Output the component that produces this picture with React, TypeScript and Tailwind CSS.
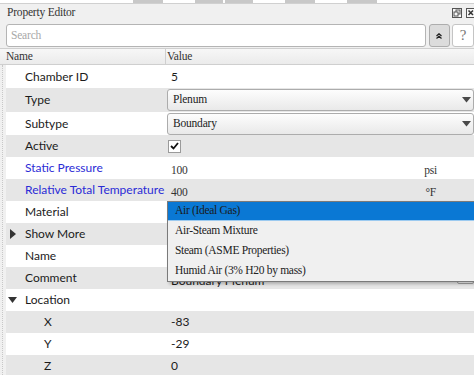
import React from "react";

const serif = { fontFamily: '"Liberation Serif", "Times New Roman", serif' };
const sans = { fontFamily: 'Lato, "Noto Sans", sans-serif' };

function Caret({ className = "" }: { className?: string }) {
  return (
    <svg width="9" height="6" viewBox="0 0 9 6" className={className}>
      <path d="M0 0 L9 0 L4.5 5.5 Z" fill="#4a4a4a" />
    </svg>
  );
}

function Dropdown({ text }: { text: string }) {
  return (
    <div className="flex h-[22px] w-full items-center justify-between rounded-[3px] border border-[#acacac] bg-gradient-to-b from-[#fdfdfd] to-[#e9e9e9] pl-[5px] pr-[2px]">
      <span className="text-[11.5px] tracking-[-0.2px] text-[#222]" style={serif}>
        {text}
      </span>
      <Caret />
    </div>
  );
}

type RowProps = {
  h: string;
  gray?: boolean;
  name: React.ReactNode;
  value?: React.ReactNode;
  indent?: string;
  icon?: React.ReactNode;
  blue?: boolean;
};

function Row({ h, gray, name, value, indent = "pl-[19px]", icon, blue }: RowProps) {
  return (
    <div className={`flex ${h} ${gray ? "bg-[#e6e6e6]" : "bg-white"}`}>
      <div className={`relative flex w-[161px] shrink-0 items-center ${indent}`}>
        {icon}
        <span
          className={`text-[12px] leading-none whitespace-nowrap ${blue ? "text-[#2b2bd6]" : "text-[#1b1b1b]"}`}
          style={sans}
        >
          {name}
        </span>
      </div>
      <div className="flex min-w-0 flex-1 items-center">{value}</div>
    </div>
  );
}

export default function App() {
  return (
    <div className="relative h-[375px] w-[474px] overflow-hidden bg-[#f0f0f0]">
      {/* top strip of tabs */}
      <div className="flex h-[4px] border-b border-[#d0d0d0] bg-white">
        <div className="w-[133px]" />
        <div className="w-[30px] bg-[#c8c8c8]" />
        <div className="w-[32px]" />
        <div className="w-[28px] bg-[#c8c8c8]" />
        <div className="w-[2px]" />
        <div className="w-[28px] bg-[#c8c8c8]" />
        <div className="w-[32px]" />
        <div className="w-[30px] bg-[#c8c8c8]" />
        <div className="w-[32px]" />
        <div className="w-[30px] bg-[#c8c8c8]" />
      </div>

      {/* title */}
      <div className="flex h-[18px] items-center justify-between pl-[7px] pr-0">
        <span className="text-[11.5px] tracking-[-0.2px] text-[#333]" style={serif}>
          Property Editor
        </span>
        <div className="flex items-center gap-[4px]">
          <svg width="10" height="10" viewBox="0 0 10 10">
            <rect x="0.5" y="0.5" width="9" height="9" fill="#f7f7f7" stroke="#555" />
            <rect x="4" y="2" width="4" height="4" fill="none" stroke="#555" />
            <rect x="2" y="4" width="4" height="4" fill="#f7f7f7" stroke="#555" />
          </svg>
          <svg width="8" height="10" viewBox="0 0 8 10">
            <rect x="0.5" y="0.5" width="9" height="9" fill="#f7f7f7" stroke="#555" />
            <path d="M2.5 2.5 L7 7 M7 2.5 L2.5 7" stroke="#333" strokeWidth="1.5" />
          </svg>
        </div>
      </div>

      {/* search row */}
      <div className="mt-[2px] flex h-[23px] items-stretch pl-[6px]">
        <div className="flex w-[425px] items-center rounded-[3px] border border-[#b4b4b4] bg-white pl-[4px]">
          <span className="text-[11.5px] tracking-[-0.2px] text-[#a8a8a8]" style={serif}>
            Search
          </span>
        </div>
        <div className="ml-[3px] flex w-[22px] items-center justify-center rounded-[3px] border border-[#adadad] bg-[#dcdcdc]">
          <svg width="6" height="6" viewBox="0 0 6 6">
            <path d="M0.5 3 L3 0.8 L5.5 3 M0.5 5.5 L3 3.3 L5.5 5.5" stroke="#222" strokeWidth="1.3" fill="none" />
          </svg>
        </div>
        <div className="ml-[2px] flex w-[22px] items-center justify-center rounded-[3px] border border-[#c4c4c4] bg-white">
          <span className="text-[15px] text-[#777]" style={serif}>
            ?
          </span>
        </div>
      </div>

      {/* header */}
      <div className="mt-[1px] flex h-[17px] border-t border-b border-[#cfcfcf] bg-gradient-to-b from-[#f7f7f7] to-[#ebebeb] pl-[6px]">
        <div className="flex w-[160px] items-center border-r border-[#cfcfcf]">
          <span className="text-[11.5px] tracking-[-0.2px] text-[#333]" style={serif}>
            Name
          </span>
        </div>
        <div className="flex items-center pl-[1px]">
          <span className="text-[11.5px] tracking-[-0.2px] text-[#333]" style={serif}>
            Value
          </span>
        </div>
      </div>

      {/* rows */}
      <div className="flex">
        <div className="w-[6px] shrink-0">
          <div className="ml-[2px] h-full border-l border-dotted border-[#c8c8c8]" />
        </div>
        <div className="flex-1">
          <Row h="h-[23px]" name="Chamber ID" value={<span className="pl-[4px] text-[12px] text-[#1b1b1b]" style={sans}>5</span>} />
          <Row h="h-[24px]" gray name="Type" value={<Dropdown text="Plenum" />} />
          <Row h="h-[23px]" name="Subtype" value={<Dropdown text="Boundary" />} />
          <Row
            h="h-[22px]"
            gray
            name="Active"
            value={
              <div className="ml-[1px] flex h-[13px] w-[13px] items-center justify-center border border-[#9a9a9a] bg-white">
                <svg width="9" height="8" viewBox="0 0 9 8">
                  <path d="M1 4 L3.5 6.5 L8 1" stroke="#111" strokeWidth="1.8" fill="none" />
                </svg>
              </div>
            }
          />
          <Row
            h="h-[22px]"
            blue
            name="Static Pressure"
            value={
              <div className="flex w-full items-center justify-between pt-[6px] pr-[37px] pl-[4px] text-[11.5px] tracking-[-0.2px] text-[#333]" style={serif}>
                <span>100</span>
                <span>psi</span>
              </div>
            }
          />
          <Row
            h="h-[22px]"
            gray
            blue
            name="Relative Total Temperature"
            value={
              <div className="flex w-full items-center justify-between pt-[5px] pr-[38px] pl-[4px] text-[11.5px] tracking-[-0.2px] text-[#333]" style={serif}>
                <span>400</span>
                <span>°F</span>
              </div>
            }
          />
          <Row h="h-[22px]" name="Material" />
          <Row
            h="h-[22px]"
            gray
            name="Show More"
            icon={
              <svg width="6" height="10" viewBox="0 0 6 10" className="absolute left-[4px] top-[6px]">
                <path d="M0 0 L6 5 L0 10 Z" fill="#333" />
              </svg>
            }
          />
          <Row h="h-[22px]" name="Name" />
          <Row
            h="h-[22px]"
            gray
            name="Comment"
            value={
              <div className="flex w-full items-center justify-between pt-[6px] pl-[4px]">
                <span className="text-[12px] text-[#1b1b1b]" style={sans}>
                  Boundary Plenum
                </span>
                <div className="mt-[-6px] flex h-[12px] w-[17px] items-start justify-center rounded-[2px] border border-[#a0a0a0] bg-[#f4f4f4] text-[9px] leading-[6px] text-[#333]">
                  ...
                </div>
              </div>
            }
          />
          <Row
            h="h-[22px]"
            name="Location"
            icon={
              <svg width="9" height="6" viewBox="0 0 9 6" className="absolute left-[2px] top-[8px]">
                <path d="M0 0 L9 0 L4.5 6 Z" fill="#333" />
              </svg>
            }
          />
          <Row h="h-[22px]" gray indent="pl-[38px]" name="X" value={<span className="pl-[4px] text-[12px] text-[#1b1b1b]" style={sans}>-83</span>} />
          <Row h="h-[22px]" indent="pl-[38px]" name="Y" value={<span className="pl-[4px] text-[12px] text-[#1b1b1b]" style={sans}>-29</span>} />
          <Row h="h-[22px]" gray indent="pl-[38px]" name="Z" value={<span className="pl-[4px] text-[12px] text-[#1b1b1b]" style={sans}>0</span>} />
        </div>
      </div>

      {/* dropdown popup */}
      <div className="absolute left-[167px] top-[201px] h-[81px] w-[312px] border border-[#7a7a7a] bg-[#f0f0f0] shadow-[2px_2px_3px_rgba(0,0,0,0.25)]">
        <div className="flex h-[19px] items-center border-b border-[#9ccaf0] bg-[#0a78d4] pl-[7px]">
          <span className="text-[11.5px] tracking-[-0.3px] text-[#1a1a1a]" style={serif}>
            Air (Ideal Gas)
          </span>
        </div>
        {["Air-Steam Mixture", "Steam (ASME Properties)", "Humid Air (3% H20 by mass)"].map((t) => (
          <div key={t} className="flex h-[20px] items-center pl-[7px]">
            <span className="text-[11.5px] tracking-[-0.3px] text-[#222]" style={serif}>
              {t}
            </span>
          </div>
        ))}
      </div>
    </div>
  );
}
